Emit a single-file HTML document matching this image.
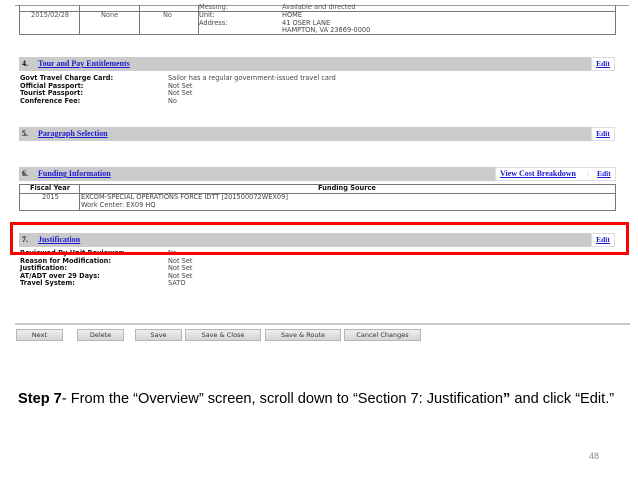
<!DOCTYPE html>
<html><head><meta charset="utf-8"><style>
*{margin:0;padding:0;box-sizing:border-box}
body{width:638px;height:478px;background:#fff;position:relative;overflow:hidden;font-family:"DejaVu Sans","Liberation Sans",sans-serif;color:#222}
.a{position:absolute;white-space:nowrap}
.s{font-size:6.6px;line-height:7.5px}
.b{font-weight:bold;color:#111}
.bar{position:absolute;left:19px;width:572px;height:14px;background:#cbcbcb}
.bar span{position:absolute;top:2px;font:bold 8px "Liberation Serif",serif;color:#111}
.bar a{position:absolute;top:2px;font:bold 8px "Liberation Serif",serif;color:#1a1ad0;text-decoration:underline}
.ed{position:absolute;width:24px;height:14px;background:#fff;border:1px solid #ddd;font:bold 7.5px "Liberation Serif",serif;color:#1a1ad0;text-decoration:underline;text-align:center;line-height:12px}
.btn{position:absolute;top:329px;height:12px;background:linear-gradient(#eee,#d6d6d6);border:1px solid #b5b5b5;font-size:6.5px;line-height:10px;text-align:center;color:#333}
.bd{position:absolute;border:1px solid #777}
</style></head><body>
<div class="a" style="left:15px;top:5px;width:614px;height:1px;background:#999"></div>
<div class="bd" style="left:19px;top:5px;width:597px;height:30px;border-top:none"></div>
<div class="a" style="left:19px;top:11px;width:597px;height:1px;background:#777"></div>
<div class="a" style="left:79px;top:5px;width:1px;height:30px;background:#777"></div>
<div class="a" style="left:139px;top:5px;width:1px;height:30px;background:#777"></div>
<div class="a" style="left:198px;top:5px;width:1px;height:30px;background:#777"></div>
<div class="a s" style="left:199px;top:4px;height:7px;overflow:hidden;color:#555">Messing:</div>
<div class="a s" style="left:282px;top:4px;height:7px;overflow:hidden;color:#555">Available and directed</div>
<div class="a s" style="left:31px;top:12px;color:#555">2015/02/28</div>
<div class="a s" style="left:101px;top:12px;color:#555">None</div>
<div class="a s" style="left:163px;top:12px;color:#555">No</div>
<div class="a s" style="left:199px;top:12px;color:#444">Unit:<br>Address:</div>
<div class="a s" style="left:282px;top:12px;color:#444">HOME<br>41 OSER LANE<br>HAMPTON, VA 23669-0000</div>

<div class="bar" style="top:57px"><span style="left:3px">4.</span><a style="left:19px">Tour and Pay Entitlements</a></div>
<div class="ed" style="left:591px;top:57px">Edit</div>
<div class="a s b" style="left:20px;top:75px">Govt Travel Charge Card:<br>Official Passport:<br>Tourist Passport:<br>Conference Fee:</div>
<div class="a s" style="left:168px;top:75px;color:#444">Sailor has a regular government-issued travel card<br>Not Set<br>Not Set<br>No</div>

<div class="bar" style="top:127px"><span style="left:3px">5.</span><a style="left:19px">Paragraph Selection</a></div>
<div class="ed" style="left:591px;top:127px">Edit</div>

<div class="bar" style="top:167px;width:476px"><span style="left:3px">6.</span><a style="left:19px">Funding Information</a></div>
<div class="a" style="left:495px;top:167px;width:121px;height:14px;background:#fff;border:1px solid #ddd"></div>
<div class="a" style="left:500px;top:169px;font:bold 8px 'Liberation Serif',serif;color:#1a1ad0;text-decoration:underline">View Cost Breakdown</div>
<div class="a" style="left:587px;top:170px;font-size:6px;color:#ccc">|</div>
<div class="a" style="left:597px;top:169px;font:bold 7.5px 'Liberation Serif',serif;color:#1a1ad0;text-decoration:underline">Edit</div>
<div class="bd" style="left:19px;top:184px;width:597px;height:27px"></div>
<div class="a" style="left:19px;top:193px;width:597px;height:1px;background:#777"></div>
<div class="a" style="left:79px;top:184px;width:1px;height:27px;background:#777"></div>
<div class="a s b" style="left:30px;top:185px">Fiscal Year</div>
<div class="a s b" style="left:318px;top:185px">Funding Source</div>
<div class="a s" style="left:42px;top:194px;color:#444">2015</div>
<div class="a s" style="left:81px;top:194px;color:#444">EXCOM-SPECIAL OPERATIONS FORCE IDTT [201500072WEX09]<br>Work Center: EX09 HQ</div>

<div class="bar" style="top:233px"><span style="left:3px">7.</span><a style="left:19px">Justification</a></div>
<div class="ed" style="left:591px;top:233px">Edit</div>
<div class="a s b" style="left:20px;top:250px">Reviewed By Unit Reviewer:<br>Reason for Modification:<br>Justification:<br>AT/ADT over 29 Days:<br>Travel System:</div>
<div class="a s" style="left:168px;top:250px;color:#444">No<br>Not Set<br>Not Set<br>Not Set<br>SATO</div>
<div class="a" style="left:10px;top:222px;width:619px;height:33px;border:3px solid #f00"></div>

<div class="a" style="left:15px;top:323px;width:615px;height:2px;background:#c8c8c8"></div>
<div class="btn" style="left:16px;width:47px">Next</div>
<div class="btn" style="left:77px;width:47px">Delete</div>
<div class="btn" style="left:135px;width:47px">Save</div>
<div class="btn" style="left:185px;width:76px">Save &amp; Close</div>
<div class="btn" style="left:265px;width:76px">Save &amp; Route</div>
<div class="btn" style="left:344px;width:77px">Cancel Changes</div>

<div class="a" style="left:18px;top:391px;font:14.6px 'Liberation Sans',sans-serif;color:#000"><b>Step 7</b>- From the “Overview” screen, scroll down to “Section 7: Justification<b>”</b> and click “Edit.”</div>
<div class="a" style="left:589px;top:451px;font:9px 'Liberation Sans',sans-serif;color:#8a8a8a">48</div>
</body></html>
